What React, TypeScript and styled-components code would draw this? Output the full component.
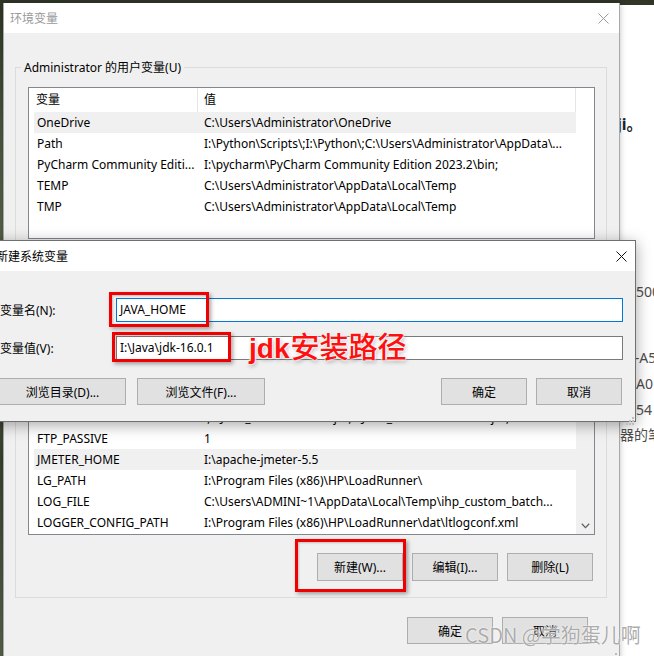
import React from "react";
import styled, { createGlobalStyle } from "styled-components";

const UI_FONT = `"Noto Sans", "Noto Sans CJK SC", sans-serif`;

const GlobalStyle = createGlobalStyle`
  html, body { margin: 0; padding: 0; }
  body {
    width: 654px;
    height: 656px;
    overflow: hidden;
    font-family: ${UI_FONT};
    font-size: 12px;
    color: #000;
  }
  * { box-sizing: border-box; }
`;

const Desktop = styled.div`
  position: relative;
  width: 654px;
  height: 656px;
  overflow: hidden;
  background: linear-gradient(180deg, #2f3626 0%, #4b5540 20%, #5e6a52 45%, #3a4230 70%, #56604a 100%);
`;

/* ---------- web page behind the dialogs ---------- */
const WebPage = styled.div`
  position: absolute;
  left: 560px;
  top: 5px;
  right: 0;
  bottom: 0;
  background: #fff;
  display: flex;
  flex-direction: column;
`;

const PageLine = styled.div<{ $top: number; $indent: number; $strong?: boolean }>`
  margin-top: ${(p) => p.$top}px;
  padding-left: ${(p) => p.$indent}px;
  height: 20px;
  line-height: 20px;
  white-space: nowrap;
  font-family: ${UI_FONT};
  font-size: ${(p) => (p.$strong ? 16 : 14)}px;
  font-weight: ${(p) => (p.$strong ? 700 : 400)};
  color: ${(p) => (p.$strong ? "#222" : "#4d4d4d")};
`;

/* ---------- window chrome ---------- */
const MainWindow = styled.div`
  position: absolute;
  left: 3px;
  top: 3px;
  width: 617px;
  height: 670px;
  border: 1px solid #a9a9a9;
  border-top: none;
  background: #f0f0f0;
  display: flex;
  flex-direction: column;
  box-shadow: 0 0 6px rgba(0, 0, 0, 0.25);
`;

const TitleBar = styled.div<{ $h: number }>`
  height: ${(p) => p.$h}px;
  flex: none;
  background: #fff;
  display: flex;
  align-items: center;
  justify-content: space-between;
`;

const TitleText = styled.span<{ $active?: boolean; $pad: number }>`
  padding-left: ${(p) => p.$pad}px;
  font-size: 12px;
  white-space: nowrap;
  color: ${(p) => (p.$active ? "#000" : "#9a9a9a")};
`;

const CloseBox = styled.div<{ $w: number }>`
  width: ${(p) => p.$w}px;
  height: 100%;
  display: flex;
  align-items: center;
  justify-content: center;
`;

const CloseIcon = ({ color }: { color: string }) => (
  <svg width="11" height="11" viewBox="0 0 11 11">
    <path d="M0.5 0.5 L10.5 10.5 M10.5 0.5 L0.5 10.5" stroke={color} strokeWidth="1" fill="none" />
  </svg>
);

const MainBody = styled.div`
  flex: 1;
  padding: 0 12px 0 11px;
  display: flex;
  flex-direction: column;
`;

const GroupBox = styled.div<{ $top: number; $bottom: number }>`
  margin-top: ${(p) => p.$top}px;
  border: 1px solid #dcdcdc;
  padding: 0 11px ${(p) => p.$bottom}px 12px;
  display: flex;
  flex-direction: column;
`;

const GroupTitle = styled.div`
  align-self: flex-start;
  margin: -8px 0 11px -7px;
  padding: 0 3px;
  height: 16px;
  line-height: 16px;
  background: #f0f0f0;
  white-space: nowrap;
`;

/* ---------- list view ---------- */
const ListView = styled.div<{ $h: number }>`
  height: ${(p) => p.$h}px;
  border: 1px solid #828790;
  background: #fff;
  display: flex;
  overflow: hidden;
`;

const ListContent = styled.div`
  flex: 1;
  display: flex;
  flex-direction: column;
  overflow: hidden;
`;

const HeaderRow = styled.div`
  height: 24px;
  flex: none;
  display: grid;
  grid-template-columns: 169px 378px;
`;

const HeaderCell = styled.div<{ $pad: number }>`
  padding-left: ${(p) => p.$pad}px;
  line-height: 24px;
  border-right: 1px solid #e5e5e5;
`;

const Row = styled.div<{ $selected?: boolean }>`
  height: 21px;
  flex: none;
  margin-left: 5px;
  width: 542px;
  display: grid;
  grid-template-columns: 164px 378px;
  background: ${(p) => (p.$selected ? "#f0f0f0" : "transparent")};
`;

const Cell = styled.div<{ $pad: number }>`
  padding-left: ${(p) => p.$pad}px;
  line-height: 21px;
  white-space: nowrap;
  overflow: hidden;
`;

const ScrollBar = styled.div`
  width: 18px;
  flex: none;
  background: #f0f0f0;
  display: flex;
  flex-direction: column;
`;

const ScrollArrow = styled.div<{ $end?: boolean }>`
  height: 17px;
  flex: none;
  margin-top: ${(p) => (p.$end ? "auto" : "0")};
  display: flex;
  align-items: center;
  justify-content: center;
`;

const ScrollThumb = styled.div`
  margin: 0 1px;
  height: 56px;
  background: #cdcdcd;
`;

/* ---------- buttons ---------- */
const ButtonRow = styled.div<{ $top: number; $right: number }>`
  margin-top: ${(p) => p.$top}px;
  padding-right: ${(p) => p.$right}px;
  display: flex;
  justify-content: flex-end;
  gap: 9px;
`;

const Button = styled.div<{ $w: number; $h?: number }>`
  width: ${(p) => p.$w}px;
  height: ${(p) => p.$h ?? 28}px;
  background: #e1e1e1;
  border: 1px solid #adadad;
  display: flex;
  align-items: center;
  justify-content: center;
  white-space: nowrap;
  font-size: 12px;
`;

const Grip = styled.div<{ $right: number; $bottom: number }>`
  position: absolute;
  right: ${(p) => p.$right}px;
  bottom: ${(p) => p.$bottom}px;
  width: 8px;
  height: 8px;
`;

const GripIcon = () => (
  <svg width="8" height="8" viewBox="0 0 8 8">
    {[
      [6, 0],
      [3, 3],
      [6, 3],
      [0, 6],
      [3, 6],
      [6, 6],
    ].map(([x, y], i) => (
      <rect key={i} x={x} y={y} width="2" height="2" fill="#bdbdbd" />
    ))}
  </svg>
);

/* ---------- new variable dialog ---------- */
const NewVarDialog = styled.div`
  position: absolute;
  left: -12px;
  top: 240px;
  width: 648px;
  height: 182px;
  border: 1px solid #6f6f6f;
  background: #f0f0f0;
  display: flex;
  flex-direction: column;
  box-shadow: 0 3px 14px rgba(0, 0, 0, 0.35);
`;

const DialogBody = styled.div`
  flex: 1;
  padding: 27px 12px 0 11px;
  display: flex;
  flex-direction: column;
`;

const FieldRow = styled.div<{ $top: number }>`
  margin-top: ${(p) => p.$top}px;
  display: grid;
  grid-template-columns: 116px 1fr;
  align-items: center;
`;

const FieldLabel = styled.div`
  white-space: nowrap;
`;

const TextBox = styled.div<{ $focused?: boolean }>`
  height: 24px;
  border: 1px solid ${(p) => (p.$focused ? "#0078d7" : "#7a7a7a")};
  background: #fff;
  padding: 0 3px;
  line-height: 22px;
  white-space: nowrap;
`;

const DialogButtons = styled.div`
  margin-top: 18px;
  padding-right: 1px;
  display: flex;
  justify-content: space-between;
`;

const ButtonGroup = styled.div<{ $gap: number; $shift?: number }>`
  display: flex;
  gap: ${(p) => p.$gap}px;
  margin-left: ${(p) => p.$shift ?? 0}px;
`;

/* ---------- annotations ---------- */
const RedBox = styled.div<{ $x: number; $y: number; $w: number; $h: number }>`
  position: absolute;
  left: ${(p) => p.$x}px;
  top: ${(p) => p.$y}px;
  width: ${(p) => p.$w}px;
  height: ${(p) => p.$h}px;
  border: 3px solid #f00000;
  box-shadow: 2px 2px 4px rgba(0, 0, 0, 0.35), inset 1px 1px 2px rgba(0, 0, 0, 0.2);
`;

const Callout = styled.div`
  position: absolute;
  left: 249px;
  top: 325px;
  height: 40px;
  line-height: 40px;
  white-space: nowrap;
  font-family: "Noto Sans CJK SC", sans-serif;
  font-size: 29px;
  font-weight: 500;
  color: #ff1010;
  text-shadow: 0 0 2px #fff, 0 0 2px #fff, 0 0 3px #fff, 1px 2px 4px rgba(0, 0, 0, 0.35);
`;

const CalloutLatin = styled.span`
  font-family: "Liberation Sans", sans-serif;
  font-weight: 700;
  font-size: 28px;
  margin-right: 1px;
`;

const Watermark = styled.div`
  position: absolute;
  left: 465px;
  top: 622px;
  height: 26px;
  line-height: 26px;
  white-space: nowrap;
  font-family: "Noto Sans CJK SC", sans-serif;
  font-size: 20px;
  color: rgba(150, 150, 150, 0.8);
  text-shadow: 0 0 1px #fff, 0 0 2px rgba(255, 255, 255, 0.8);
`;

const ChevronDown = () => (
  <svg width="9" height="6" viewBox="0 0 9 6">
    <path d="M0.8 0.8 L4.5 4.6 L8.2 0.8" stroke="#606060" strokeWidth="1.3" fill="none" />
  </svg>
);
const ChevronUp = () => (
  <svg width="9" height="6" viewBox="0 0 9 6">
    <path d="M0.8 5.2 L4.5 1.4 L8.2 5.2" stroke="#606060" strokeWidth="1.3" fill="none" />
  </svg>
);

const userVars: [string, string, boolean?][] = [
  ["OneDrive", "C:\\Users\\Administrator\\OneDrive", true],
  ["Path", "I:\\Python\\Scripts\\;I:\\Python\\;C:\\Users\\Administrator\\AppData\\..."],
  ["PyCharm Community Editi...", "I:\\pycharm\\PyCharm Community Edition 2023.2\\bin;"],
  ["TEMP", "C:\\Users\\Administrator\\AppData\\Local\\Temp"],
  ["TMP", "C:\\Users\\Administrator\\AppData\\Local\\Temp"],
];

const sysVars: [string, string, boolean?][] = [
  ["ANT_HOME", "I:\\apache-ant-1.10.12"],
  ["CATALINA_HOME", "I:\\apache-tomcat-9.0.65"],
  ["ComSpec", "C:\\Windows\\system32\\cmd.exe"],
  ["CLASSPATH", ".;%JAVA_HOME%\\lib\\dt.jar;%JAVA_HOME%\\lib\\tools.jar;"],
  ["FTP_PASSIVE", "1"],
  ["JMETER_HOME", "I:\\apache-jmeter-5.5", true],
  ["LG_PATH", "I:\\Program Files (x86)\\HP\\LoadRunner\\"],
  ["LOG_FILE", "C:\\Users\\ADMINI~1\\AppData\\Local\\Temp\\ihp_custom_batch..."],
  ["LOGGER_CONFIG_PATH", "I:\\Program Files (x86)\\HP\\LoadRunner\\dat\\ltlogconf.xml"],
];

const VarRows = ({ rows }: { rows: [string, string, boolean?][] }) => (
  <>
    {rows.map(([k, v, sel]) => (
      <Row key={k} $selected={!!sel}>
        <Cell $pad={3}>{k}</Cell>
        <Cell $pad={6}>{v}</Cell>
      </Row>
    ))}
  </>
);

const ListHeader = () => (
  <HeaderRow>
    <HeaderCell $pad={7}>变量</HeaderCell>
    <HeaderCell $pad={6}>值</HeaderCell>
  </HeaderRow>
);

export default function App() {
  return (
    <>
      <GlobalStyle />
      <Desktop>
        <WebPage>
          <PageLine $top={109} $indent={57} $strong>
            ji。
          </PageLine>
          <PageLine $top={148} $indent={68}>
            1500
          </PageLine>
          <PageLine $top={46} $indent={70}>
            I-A5
          </PageLine>
          <PageLine $top={6} $indent={68}>
            5A0
          </PageLine>
          <PageLine $top={6} $indent={68}>
            154 |
          </PageLine>
          <PageLine $top={5} $indent={46}>
            储器的笔
          </PageLine>
        </WebPage>

        <MainWindow>
          <TitleBar $h={30}>
            <TitleText $pad={6}>环境变量</TitleText>
            <CloseBox $w={31}>
              <CloseIcon color="#9a9a9a" />
            </CloseBox>
          </TitleBar>
          <MainBody>
            <GroupBox $top={34} $bottom={10}>
              <GroupTitle>Administrator 的用户变量(U)</GroupTitle>
              <ListView $h={152}>
                <ListContent>
                  <ListHeader />
                  <VarRows rows={userVars} />
                </ListContent>
              </ListView>
              <ButtonRow $top={9} $right={2}>
                <Button $w={86}>新建(N)...</Button>
                <Button $w={86}>编辑(E)...</Button>
                <Button $w={86}>删除(D)</Button>
              </ButtonRow>
            </GroupBox>

            <GroupBox $top={12} $bottom={16}>
              <GroupTitle>系统变量(S)</GroupTitle>
              <ListView $h={216}>
                <ListContent>
                  <ListHeader />
                  <VarRows rows={sysVars} />
                </ListContent>
                <ScrollBar>
                  <ScrollArrow>
                    <ChevronUp />
                  </ScrollArrow>
                  <ScrollThumb />
                  <ScrollArrow $end>
                    <ChevronDown />
                  </ScrollArrow>
                </ScrollBar>
              </ListView>
              <ButtonRow $top={18} $right={2}>
                <Button $w={86}>新建(W)...</Button>
                <Button $w={86}>编辑(I)...</Button>
                <Button $w={86}>删除(L)</Button>
              </ButtonRow>
            </GroupBox>

            <ButtonRow $top={19} $right={19}>
              <Button $w={86} $h={27}>
                确定
              </Button>
              <Button $w={86} $h={27}>
                取消
              </Button>
            </ButtonRow>
          </MainBody>
          <Grip $right={2} $bottom={16}>
            <GripIcon />
          </Grip>
        </MainWindow>

        <NewVarDialog>
          <TitleBar $h={30}>
            <TitleText $pad={7} $active>
              新建系统变量
            </TitleText>
            <CloseBox $w={28}>
              <CloseIcon color="#111" />
            </CloseBox>
          </TitleBar>
          <DialogBody>
            <FieldRow $top={0}>
              <FieldLabel>变量名(N):</FieldLabel>
              <TextBox $focused>JAVA_HOME</TextBox>
            </FieldRow>
            <FieldRow $top={14}>
              <FieldLabel>变量值(V):</FieldLabel>
              <TextBox>I:\Java\jdk-16.0.1</TextBox>
            </FieldRow>
            <DialogButtons>
              <ButtonGroup $gap={11} $shift={-1}>
                <Button $w={127} $h={27}>
                  浏览目录(D)...
                </Button>
                <Button $w={128} $h={27}>
                  浏览文件(F)...
                </Button>
              </ButtonGroup>
              <ButtonGroup $gap={9}>
                <Button $w={86} $h={27}>
                  确定
                </Button>
                <Button $w={86} $h={27}>
                  取消
                </Button>
              </ButtonGroup>
            </DialogButtons>
          </DialogBody>
          <Grip $right={1} $bottom={1}>
            <GripIcon />
          </Grip>
        </NewVarDialog>

        <RedBox $x={109} $y={292} $w={100} $h={35} />
        <RedBox $x={112} $y={332} $w={119} $h={30} />
        <RedBox $x={295} $y={539} $w={111} $h={53} />
        <Callout>
          <CalloutLatin>jdk</CalloutLatin>安装路径
        </Callout>
        <Watermark>CSDN @学狗蛋儿啊</Watermark>
      </Desktop>
    </>
  );
}
